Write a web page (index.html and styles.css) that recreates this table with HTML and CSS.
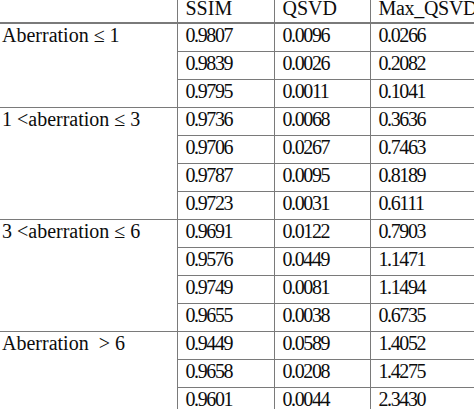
FILE: index.html
```html
<!DOCTYPE html>
<html>
<head>
<meta charset="utf-8">
<link rel="stylesheet" href="styles.css">
</head>
<body>
<table class="results">
  <colgroup>
    <col class="c-label"><col class="c-ssim"><col class="c-qsvd"><col class="c-max">
  </colgroup>
  <thead>
    <tr><th class="label"></th><th>SSIM</th><th>QSVD</th><th>Max_QSVD</th></tr>
  </thead>
  <tbody>
    <tr><td class="label" rowspan="3">Aberration ≤ 1</td><td class="num">0.9807</td><td class="num">0.0096</td><td class="num">0.0266</td></tr>
    <tr><td class="num">0.9839</td><td class="num">0.0026</td><td class="num">0.2082</td></tr>
    <tr><td class="num">0.9795</td><td class="num">0.0011</td><td class="num">0.1041</td></tr>
    <tr><td class="label" rowspan="4">1 &lt;aberration ≤ 3</td><td class="num">0.9736</td><td class="num">0.0068</td><td class="num">0.3636</td></tr>
    <tr><td class="num">0.9706</td><td class="num">0.0267</td><td class="num">0.7463</td></tr>
    <tr><td class="num">0.9787</td><td class="num">0.0095</td><td class="num">0.8189</td></tr>
    <tr><td class="num">0.9723</td><td class="num">0.0031</td><td class="num">0.6111</td></tr>
    <tr><td class="label" rowspan="4">3 &lt;aberration ≤ 6</td><td class="num">0.9691</td><td class="num">0.0122</td><td class="num">0.7903</td></tr>
    <tr><td class="num">0.9576</td><td class="num">0.0449</td><td class="num">1.1471</td></tr>
    <tr><td class="num">0.9749</td><td class="num">0.0081</td><td class="num">1.1494</td></tr>
    <tr><td class="num">0.9655</td><td class="num">0.0038</td><td class="num">0.6735</td></tr>
    <tr><td class="label" rowspan="3">Aberration&nbsp;&nbsp;&gt; 6</td><td class="num">0.9449</td><td class="num">0.0589</td><td class="num">1.4052</td></tr>
    <tr><td class="num">0.9658</td><td class="num">0.0208</td><td class="num">1.4275</td></tr>
    <tr><td class="num">0.9601</td><td class="num">0.0044</td><td class="num">2.3430</td></tr>
  </tbody>
</table>
</body>
</html>
```

FILE: styles.css
```css
html, body {
  margin: 0;
  padding: 0;
  background: #ffffff;
  overflow: hidden;
}
body {
  width: 474px;
  height: 409px;
}
.results {
  border-collapse: collapse;
  table-layout: fixed;
  width: 520px;
  font-family: "Liberation Serif", "Times New Roman", serif;
  font-size: 20px;
  color: #0c0c0c;
}
.c-label { width: 177px; }
.c-ssim { width: 97px; }
.c-qsvd { width: 96px; }
.c-max { width: 150px; }
.results th,
.results td {
  border: 1px solid #7a7a7a;
  font-weight: normal;
  text-align: left;
  vertical-align: top;
  line-height: 23px;
  padding: 0 0 4px 8px;
  white-space: nowrap;
}
.results th {
  line-height: 15px;
  padding-top: 1px;
  padding-bottom: 6px;
  border-top: none;
  border-bottom: 2px solid #7a7a7a;
}
.results .label {
  border-left: none;
  padding-left: 2px;
}
.results .num {
  letter-spacing: -1.4px;
}
.results th:last-child {
  letter-spacing: -0.3px;
}
```
